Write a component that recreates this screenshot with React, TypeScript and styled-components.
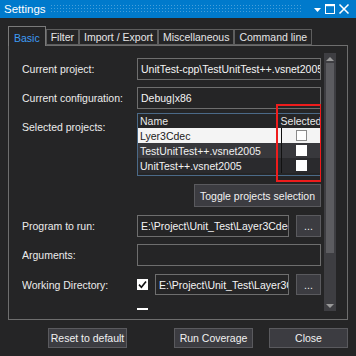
import React from "react";
import styled, { createGlobalStyle } from "styled-components";

const Global = createGlobalStyle`
  html, body { margin: 0; padding: 0; background: #252526; overflow: hidden; }
  * { box-sizing: border-box; }
`;

const FONT = `"Liberation Sans", Arial, sans-serif`;

const Window = styled.div`
  width: 356px;
  height: 356px;
  background: #252526;
  display: flex;
  flex-direction: column;
  font-family: ${FONT};
  font-size: 10.5px;
  color: #f1f1f1;
`;

const TitleBar = styled.div`
  height: 18px;
  background: #007acc;
  display: flex;
  align-items: center;
  padding: 0 6px 0 4px;
`;

const Title = styled.span`
  font-size: 11.5px;
  color: #ffffff;
`;

const Dots = styled.div`
  flex: 1;
  height: 10px;
  margin: 0 12px 0 4px;
  background-image: radial-gradient(circle, rgba(255, 255, 255, 0.28) 0.7px, transparent 0.9px);
  background-size: 3px 3px;
`;

const Controls = styled.div`
  display: flex;
  align-items: center;
  gap: 3px;
`;

const Body = styled.div`
  flex: 1;
  display: flex;
  flex-direction: column;
  padding: 8px 8px 0 8px;
`;

const TabStrip = styled.div`
  display: flex;
  align-items: flex-end;
  height: 19px;
  position: relative;
  z-index: 1;
`;

const Tab = styled.div<{ $active?: boolean }>`
  height: ${(p) => (p.$active ? "20px" : "16px")};
  margin-bottom: ${(p) => (p.$active ? "-1px" : "0")};
  padding: ${(p) => (p.$active ? "2px 5px 0 5px" : "0 4px")};
  border: 1px solid ${(p) => (p.$active ? "#7a7a7a" : "#5e5e5e")};
  border-bottom: ${(p) => (p.$active ? "none" : "1px solid #5e5e5e")};
  background: #252526;
  color: ${(p) => (p.$active ? "#3e9cf5" : "#e6e6e6")};
  font-size: 10.5px;
  display: flex;
  align-items: center;
  white-space: nowrap;
`;

const Panel = styled.div`
  height: 275px;
  border: 1px solid #6e6e6e;
  display: flex;
  padding: 7px 11px 8px 13px;
`;

const Viewport = styled.div`
  flex: 1;
  overflow: hidden;
  margin-bottom: 1px;
`;

const Form = styled.div`
  display: flex;
  flex-direction: column;
  padding-top: 5px;
`;

const Row = styled.div<{ $gap?: number; $top?: boolean }>`
  display: flex;
  min-height: 21px;
  align-items: ${(p) => (p.$top ? "flex-start" : "center")};
  margin-top: ${(p) => p.$gap ?? 0}px;
`;

const Label = styled.div<{ $pad?: number }>`
  width: 115px;
  flex: none;
  padding-top: ${(p) => p.$pad ?? 0}px;
  color: #ececec;
  white-space: nowrap;
`;

const Field = styled.div`
  flex: 1;
  display: flex;
  align-items: center;
  gap: 7px;
  min-width: 0;
`;

const TextBox = styled.div<{ $h?: number }>`
  flex: 1;
  min-width: 0;
  height: ${(p) => p.$h ?? 22}px;
  border: 1px solid #6e6e6e;
  background: #252526;
  padding: 0 3px;
  display: flex;
  align-items: center;
  white-space: nowrap;
  overflow: hidden;
  color: #f4f4f4;
`;

const Button = styled.div<{ $w?: number; $h?: number }>`
  width: ${(p) => p.$w ?? 79}px;
  height: ${(p) => p.$h ?? 22}px;
  flex: none;
  background: #3c3c41;
  border: 1px solid #5a5a5e;
  display: flex;
  align-items: center;
  justify-content: center;
  color: #f1f1f1;
  white-space: nowrap;
`;

const ToggleWrap = styled.div`
  flex: 1;
  display: flex;
  justify-content: flex-end;
`;

const Check = styled.div<{ $border?: boolean }>`
  width: 11px;
  height: 11px;
  flex: none;
  background: #ffffff;
  border: 1px solid ${(p) => (p.$border ? "#8a8a8a" : "#ffffff")};
  display: flex;
  align-items: center;
  justify-content: center;
`;

const ListWrap = styled.div`
  flex: 1;
  position: relative;
`;

const List = styled.div`
  height: 63px;
  border: 1px solid #4b6a88;
  display: flex;
  flex-direction: column;
  background: #252526;
`;

const ListRow = styled.div<{ $bg: string; $fg?: string; $h?: number }>`
  height: ${(p) => p.$h ?? 15}px;
  display: grid;
  grid-template-columns: 1fr 39px;
  background: ${(p) => p.$bg};
  color: ${(p) => p.$fg ?? "#f1f1f1"};
`;

const NameCell = styled.div`
  display: flex;
  align-items: center;
  padding-left: 2px;
  white-space: nowrap;
  overflow: hidden;
`;

const SelCell = styled.div<{ $divider?: boolean }>`
  display: flex;
  align-items: center;
  justify-content: center;
  border-left: 1px solid ${(p) => (p.$divider ? "#111111" : "transparent")};
`;

const HeaderText = styled.span`
  color: #e8e8e8;
`;

const Highlight = styled.div`
  position: absolute;
  left: 139px;
  top: -9px;
  width: 46px;
  height: 78px;
  border: 2px solid #ee1c1c;
  pointer-events: none;
`;

const Scrollbar = styled.div`
  width: 12px;
  margin-left: 3px;
  background: #3e3e42;
  display: flex;
  flex-direction: column;
  align-items: center;
`;

const ScrollArrow = styled.div`
  height: 10px;
  display: flex;
  align-items: center;
  justify-content: center;
`;

const Thumb = styled.div`
  width: 8px;
  height: 190px;
  background: #5c5c60;
`;

const ScrollSpacer = styled.div`
  flex: 1;
`;

const Footer = styled.div`
  display: flex;
  align-items: center;
  padding: 8px 0 0 40px;
`;

const FooterRight = styled.div`
  margin-left: auto;
  display: flex;
  gap: 16px;
`;

const Tick = () => (
  <svg width="9" height="9" viewBox="0 0 9 9">
    <path d="M1 4.6 L3.4 7.2 L8 1.4" fill="none" stroke="#111" strokeWidth="1.6" />
  </svg>
);

const projects = [
  { name: "Lyer3Cdec", bg: "#f4f4f4", fg: "#1a1a1a", border: true },
  { name: "TestUnitTest++.vsnet2005", bg: "#38383c" },
  { name: "UnitTest++.vsnet2005", bg: "#2a2a2d" },
];

export default function App() {
  return (
    <Window>
      <Global />
      <TitleBar>
        <Title>Settings</Title>
        <Dots />
        <Controls>
          <svg width="9" height="10" viewBox="0 0 9 10">
            <path d="M1 4 L8 4 L4.5 8 Z" fill="#fff" />
          </svg>
          <svg width="10" height="10" viewBox="0 0 10 10">
            <rect x="0.5" y="0.5" width="9" height="9" fill="none" stroke="#fff" />
            <rect x="0" y="0" width="10" height="2.2" fill="#fff" />
          </svg>
          <svg width="12" height="10" viewBox="0 0 12 10">
            <path d="M1.5 0.5 L10.5 9.5 M10.5 0.5 L1.5 9.5" stroke="#fff" strokeWidth="1.5" />
          </svg>
        </Controls>
      </TitleBar>
      <Body>
        <TabStrip>
          <Tab $active>Basic</Tab>
          <Tab>Filter</Tab>
          <Tab>Import / Export</Tab>
          <Tab>Miscellaneous</Tab>
          <Tab>Command line</Tab>
        </TabStrip>
        <Panel>
          <Viewport>
            <Form>
              <Row>
                <Label>Current project:</Label>
                <Field>
                  <TextBox>UnitTest-cpp\TestUnitTest++.vsnet2005</TextBox>
                </Field>
              </Row>
              <Row $gap={7}>
                <Label>Current configuration:</Label>
                <Field>
                  <TextBox>Debug|x86</TextBox>
                </Field>
              </Row>
              <Row $gap={4} $top>
                <Label $pad={8}>Selected projects:</Label>
                <ListWrap>
                  <List>
                    <ListRow $bg="#252526" $h={14}>
                      <NameCell>
                        <HeaderText>Name</HeaderText>
                      </NameCell>
                      <SelCell>
                        <HeaderText>Selected</HeaderText>
                      </SelCell>
                    </ListRow>
                    {projects.map((p) => (
                      <ListRow key={p.name} $bg={p.bg} $fg={p.fg}>
                        <NameCell>{p.name}</NameCell>
                        <SelCell $divider>
                          <Check $border={p.border} />
                        </SelCell>
                      </ListRow>
                    ))}
                  </List>
                  <Highlight />
                </ListWrap>
              </Row>
              <Row $gap={8}>
                <Label />
                <ToggleWrap>
                  <Button $w={127} $h={23}>Toggle projects selection</Button>
                </ToggleWrap>
              </Row>
              <Row $gap={8}>
                <Label>Program to run:</Label>
                <Field>
                  <TextBox>E:\Project\Unit_Test\Layer3Cdec\</TextBox>
                  <Button $w={25}>...</Button>
                </Field>
              </Row>
              <Row $gap={7}>
                <Label>Arguments:</Label>
                <Field>
                  <TextBox />
                </Field>
              </Row>
              <Row $gap={8}>
                <Label>Working Directory:</Label>
                <Field>
                  <Check>
                    <Tick />
                  </Check>
                  <TextBox $h={21}>E:\Project\Unit_Test\Layer3Cdec</TextBox>
                  <Button $w={25} $h={21}>...</Button>
                </Field>
              </Row>
              <Row $gap={8}>
                <Label>Include only selected</Label>
                <Field>
                  <Check />
                </Field>
              </Row>
            </Form>
          </Viewport>
          <Scrollbar>
            <ScrollArrow>
              <svg width="8" height="5" viewBox="0 0 8 5">
                <path d="M0 5 L4 1 L8 5 Z" fill="#9a9a9a" />
              </svg>
            </ScrollArrow>
            <Thumb />
            <ScrollSpacer />
            <ScrollArrow>
              <svg width="8" height="5" viewBox="0 0 8 5">
                <path d="M0 0 L8 0 L4 4 Z" fill="#9a9a9a" />
              </svg>
            </ScrollArrow>
          </Scrollbar>
        </Panel>
        <Footer>
          <Button $w={79} $h={20}>Reset to default</Button>
          <FooterRight>
            <Button $w={79} $h={20}>Run Coverage</Button>
            <Button $w={79} $h={20}>Close</Button>
          </FooterRight>
        </Footer>
      </Body>
    </Window>
  );
}
